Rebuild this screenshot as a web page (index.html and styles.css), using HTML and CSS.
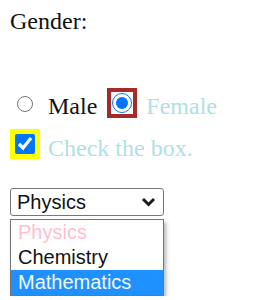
FILE: index.html
```html
<!DOCTYPE html>
<html lang="en">
<head>
    <meta charset="UTF-8">
    <meta name="viewport" content="width=device-width, initial-scale=1.0">
    <title>Form controls</title>
    <link rel="stylesheet" href="styles.css">
</head>
<body>
    <div class="label">Gender:</div>

    <div class="row gender-row">
        <input class="radio first" type="radio" name="gender" id="male">
        <label class="text" for="male">Male</label>
        <span class="red-box"><input class="radio" type="radio" name="gender" id="female" checked></span>
        <label class="text light" for="female">Female</label>
    </div>

    <div class="row check-row">
        <span class="yellow-box"><input class="check" type="checkbox" id="agree" checked></span>
        <label class="text light check-text" for="agree">Check the box.</label>
    </div>

    <div class="select-box">
        <span>Physics</span>
        <svg class="chevron" width="15" height="10" viewBox="0 0 15 10">
            <path d="M2 2 L7.5 7.5 L13 2" fill="none" stroke="#1a1a1a" stroke-width="3"/>
        </svg>
    </div>
    <div class="option-list">
        <div class="option pink">Physics</div>
        <div class="option">Chemistry</div>
        <div class="option selected">Mathematics</div>
    </div>
</body>
</html>
```

FILE: styles.css
```css
* {
    margin: 0;
    padding: 0;
    box-sizing: border-box;
}

body {
    font-family: 'Liberation Serif', 'Times New Roman', serif;
    font-size: 24px;
    line-height: 28px;
    color: #111;
    background: #fff;
    padding: 7px 0 0 10px;
}

.label {
    height: 28px;
}

.row {
    display: flex;
    align-items: flex-start;
    height: 30px;
}

.gender-row {
    margin-top: 53px;
}

.check-row {
    margin-top: 11px;
}

.radio {
    width: 20px;
    height: 20px;
    margin: 0;
    accent-color: #0075ff;
}

.radio.first {
    width: 16px;
    height: 16px;
    margin: 8px 15px 0 7px;
}

.text {
    margin-top: 4px;
}

.text.light {
    color: #b0e0e6;
}

.red-box {
    display: flex;
    align-items: center;
    justify-content: center;
    width: 30px;
    height: 30px;
    border: 4px solid #a52a2a;
    margin: 0 9px 0 10px;
}

.yellow-box {
    display: flex;
    align-items: center;
    justify-content: center;
    width: 30px;
    height: 30px;
    background: #ffff00;
    margin-right: 8px;
}

.check {
    width: 20px;
    height: 20px;
    margin: 0;
    accent-color: #0075ff;
}

.check-text {
    margin-top: 5px;
}

.select-box {
    display: flex;
    align-items: center;
    justify-content: space-between;
    width: 154px;
    height: 28px;
    margin-top: 29px;
    padding: 0 7px 0 6px;
    border: 1px solid #767676;
    border-radius: 3px;
    font-family: 'Liberation Sans', Arial, sans-serif;
    font-size: 20px;
    line-height: 22px;
    color: #111;
}

.option-list {
    width: 154px;
    margin-top: 3px;
    border: 1px solid #767676;
    box-shadow: 2px 3px 4px rgba(0, 0, 0, 0.3);
    font-family: 'Liberation Sans', Arial, sans-serif;
    font-size: 20px;
    line-height: 25px;
    color: #111;
}

.option {
    height: 25px;
    padding-left: 7px;
}

.option.pink {
    color: #ffc0cb;
}

.option.selected {
    background: #1e90ff;
    color: #f4faff;
}
```
